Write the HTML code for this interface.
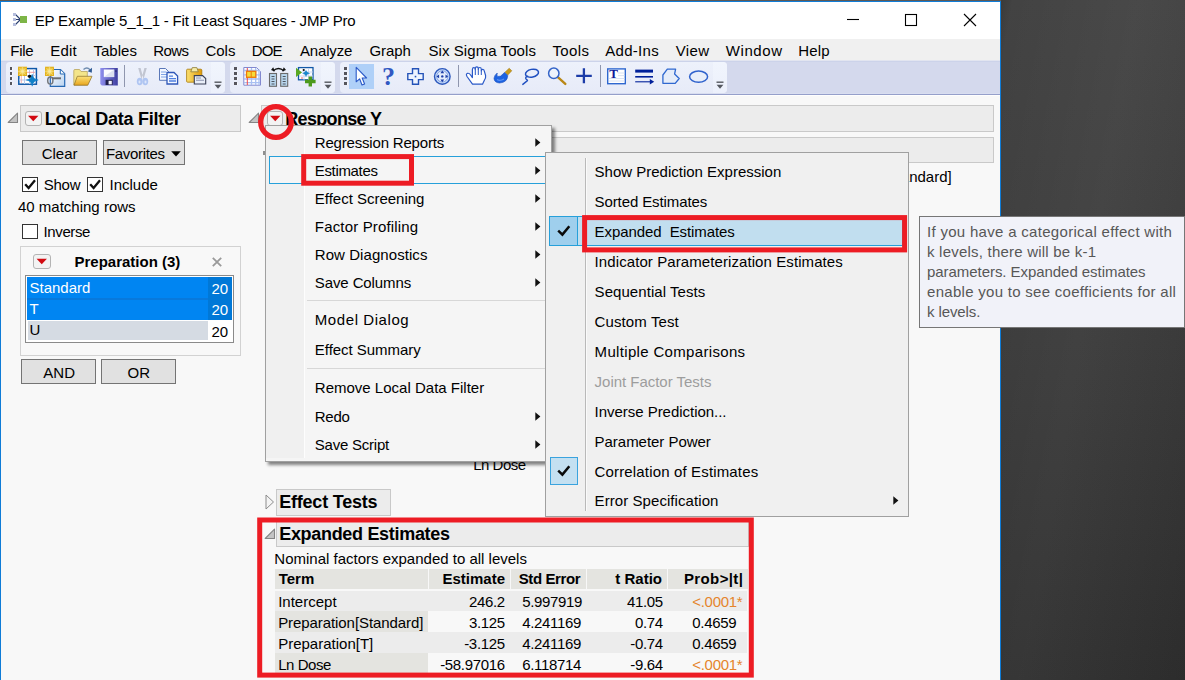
<!DOCTYPE html>
<html><head><meta charset="utf-8"><title>EP Example 5_1_1 - Fit Least Squares - JMP Pro</title>
<style>
html,body{margin:0;padding:0;}
body{width:1185px;height:680px;overflow:hidden;position:relative;background:#3a3a3a;font-family:"Liberation Sans", sans-serif;}
.b{position:absolute;box-sizing:border-box;}
.t{position:absolute;white-space:pre;}
svg{position:absolute;overflow:visible;}
</style></head><body>
<div class="b" style="left:1001px;top:0px;width:184px;height:680px;background:linear-gradient(to bottom,#434343 0,#3f3f3f 30%,#3a3a3a 55%,#303030 100%);"></div>
<div class="b" style="left:1001px;top:0px;width:184px;height:680px;background:linear-gradient(100deg,rgba(0,0,0,.12) 0,rgba(0,0,0,0) 12px,rgba(255,255,255,.03) 45%,rgba(0,0,0,.08) 100%);"></div>
<div class="b" style="left:0px;top:0px;width:1001px;height:680px;background:#f8f8f8;border-left:1px solid #0f7cd7;border-right:1px solid #0f7cd7;"></div>
<div class="b" style="left:0px;top:0px;width:1001px;height:1px;background:#5d5955;"></div>
<div class="b" style="left:0px;top:1px;width:1001px;height:1px;background:#0f7cd7;"></div>
<div class="b" style="left:1px;top:2px;width:999px;height:37px;background:#fff;"></div>
<svg style="left:12px;top:12px" width="16" height="16" viewBox="0 0 16 16">
<path d="M3.5 2.5 L8 7 M3.5 7.5 L8 7.5 M3.5 12.5 L8 8" stroke="#2a3f6e" stroke-width="1.1" fill="none"/>
<rect x="1" y="1" width="3" height="3" fill="#b4bcdc"/><rect x="1" y="6" width="3" height="3" fill="#b4bcdc"/><rect x="1" y="11" width="3" height="3" fill="#b4bcdc"/>
<rect x="8" y="4" width="7" height="7" fill="#7db546"/></svg>
<div class="t" style="left:34.8px;top:13.00px;font-size:15px;line-height:15px;color:#000;letter-spacing:-0.194px;">EP Example 5_1_1 - Fit Least Squares - JMP Pro</div>
<svg style="left:840px;top:8px" width="150" height="24" viewBox="0 0 150 24" fill="none" stroke="#000" stroke-width="1.1">
<path d="M7 11.5 H19"/><rect x="65.5" y="6.5" width="11" height="11"/><path d="M124 6 L136 18 M136 6 L124 18"/></svg>
<div class="b" style="left:1px;top:39px;width:999px;height:22px;background:#f0f0f0;"></div>
<div class="t" style="left:10.3px;top:43.00px;font-size:15px;line-height:15px;color:#000;letter-spacing:-0.257px;">File</div>
<div class="t" style="left:50.3px;top:43.00px;font-size:15px;line-height:15px;color:#000;letter-spacing:0.18px;">Edit</div>
<div class="t" style="left:93.5px;top:43.00px;font-size:15px;line-height:15px;color:#000;letter-spacing:0.008px;">Tables</div>
<div class="t" style="left:153.3px;top:43.00px;font-size:15px;line-height:15px;color:#000;letter-spacing:-0.605px;">Rows</div>
<div class="t" style="left:205.5px;top:43.00px;font-size:15px;line-height:15px;color:#000;letter-spacing:-0.039px;">Cols</div>
<div class="t" style="left:251.7px;top:43.00px;font-size:15px;line-height:15px;color:#000;letter-spacing:-0.858px;">DOE</div>
<div class="t" style="left:300px;top:43.00px;font-size:15px;line-height:15px;color:#000;letter-spacing:-0.163px;">Analyze</div>
<div class="t" style="left:369.5px;top:43.00px;font-size:15px;line-height:15px;color:#000;letter-spacing:-0.076px;">Graph</div>
<div class="t" style="left:428.5px;top:43.00px;font-size:15px;line-height:15px;color:#000;letter-spacing:0.069px;">Six Sigma Tools</div>
<div class="t" style="left:552.5px;top:43.00px;font-size:15px;line-height:15px;color:#000;letter-spacing:0.342px;">Tools</div>
<div class="t" style="left:605.3px;top:43.00px;font-size:15px;line-height:15px;color:#000;letter-spacing:0.283px;">Add-Ins</div>
<div class="t" style="left:675.7px;top:43.00px;font-size:15px;line-height:15px;color:#000;letter-spacing:0.383px;">View</div>
<div class="t" style="left:725.7px;top:43.00px;font-size:15px;line-height:15px;color:#000;letter-spacing:0.608px;">Window</div>
<div class="t" style="left:798.3px;top:43.00px;font-size:15px;line-height:15px;color:#000;letter-spacing:0.18px;">Help</div>
<div class="b" style="left:1px;top:60px;width:999px;height:34px;background:#d4d9ed;"></div>
<div class="b" style="left:1px;top:60px;width:999px;height:1px;background:#e2e5f0;"></div>
<div class="b" style="left:1px;top:61px;width:999px;height:1px;background:#ccd3ea;"></div>
<div class="b" style="left:1px;top:93px;width:999px;height:1px;background:#d8ddf0;"></div>
<div class="b" style="left:1px;top:94px;width:999px;height:1px;background:#959fca;"></div>
<div class="b" style="left:1px;top:95px;width:999px;height:1px;background:#fefefe;"></div>
<div class="b" style="left:5.5px;top:62px;width:219.5px;height:30.5px;background:linear-gradient(#edf1fb,#e7ebf8);border-radius:4px;"></div>
<div class="b" style="left:210.5px;top:62px;width:14.5px;height:30.5px;background:linear-gradient(#f1f5fd,#ecf0fb);border-radius:0 4px 4px 0;"></div>
<div class="b" style="left:10.5px;top:67.8px;width:2.8px;height:2.5px;background:#f7f8fd;"></div>
<div class="b" style="left:9.7px;top:67px;width:2.8px;height:2.5px;background:#55555c;"></div>
<div class="b" style="left:10.5px;top:72.8px;width:2.8px;height:2.5px;background:#f7f8fd;"></div>
<div class="b" style="left:9.7px;top:72px;width:2.8px;height:2.5px;background:#55555c;"></div>
<div class="b" style="left:10.5px;top:77.8px;width:2.8px;height:2.5px;background:#f7f8fd;"></div>
<div class="b" style="left:9.7px;top:77px;width:2.8px;height:2.5px;background:#55555c;"></div>
<div class="b" style="left:10.5px;top:82.8px;width:2.8px;height:2.5px;background:#f7f8fd;"></div>
<div class="b" style="left:9.7px;top:82px;width:2.8px;height:2.5px;background:#55555c;"></div>
<svg style="left:214.05px;top:81px" width="8" height="9" viewBox="0 0 8 9"><path d="M0.5 1.2 H7.5" stroke="#55585f" stroke-width="1.4"/><path d="M0.6 3.8 H7.4 L4 7.8 Z" fill="#55585f"/></svg>
<div class="b" style="left:230px;top:62px;width:105px;height:30.5px;background:linear-gradient(#edf1fb,#e7ebf8);border-radius:4px;"></div>
<div class="b" style="left:321px;top:62px;width:14px;height:30.5px;background:linear-gradient(#f1f5fd,#ecf0fb);border-radius:0 4px 4px 0;"></div>
<div class="b" style="left:235px;top:67.8px;width:2.8px;height:2.5px;background:#f7f8fd;"></div>
<div class="b" style="left:234.2px;top:67px;width:2.8px;height:2.5px;background:#55555c;"></div>
<div class="b" style="left:235px;top:72.8px;width:2.8px;height:2.5px;background:#f7f8fd;"></div>
<div class="b" style="left:234.2px;top:72px;width:2.8px;height:2.5px;background:#55555c;"></div>
<div class="b" style="left:235px;top:77.8px;width:2.8px;height:2.5px;background:#f7f8fd;"></div>
<div class="b" style="left:234.2px;top:77px;width:2.8px;height:2.5px;background:#55555c;"></div>
<div class="b" style="left:235px;top:82.8px;width:2.8px;height:2.5px;background:#f7f8fd;"></div>
<div class="b" style="left:234.2px;top:82px;width:2.8px;height:2.5px;background:#55555c;"></div>
<svg style="left:324.3px;top:81px" width="8" height="9" viewBox="0 0 8 9"><path d="M0.5 1.2 H7.5" stroke="#55585f" stroke-width="1.4"/><path d="M0.6 3.8 H7.4 L4 7.8 Z" fill="#55585f"/></svg>
<div class="b" style="left:340px;top:62px;width:387px;height:30.5px;background:linear-gradient(#edf1fb,#e7ebf8);border-radius:4px;"></div>
<div class="b" style="left:713px;top:62px;width:14px;height:30.5px;background:linear-gradient(#f1f5fd,#ecf0fb);border-radius:0 4px 4px 0;"></div>
<div class="b" style="left:345px;top:67.8px;width:2.8px;height:2.5px;background:#f7f8fd;"></div>
<div class="b" style="left:344.2px;top:67px;width:2.8px;height:2.5px;background:#55555c;"></div>
<div class="b" style="left:345px;top:72.8px;width:2.8px;height:2.5px;background:#f7f8fd;"></div>
<div class="b" style="left:344.2px;top:72px;width:2.8px;height:2.5px;background:#55555c;"></div>
<div class="b" style="left:345px;top:77.8px;width:2.8px;height:2.5px;background:#f7f8fd;"></div>
<div class="b" style="left:344.2px;top:77px;width:2.8px;height:2.5px;background:#55555c;"></div>
<div class="b" style="left:345px;top:82.8px;width:2.8px;height:2.5px;background:#f7f8fd;"></div>
<div class="b" style="left:344.2px;top:82px;width:2.8px;height:2.5px;background:#55555c;"></div>
<svg style="left:716.3px;top:81px" width="8" height="9" viewBox="0 0 8 9"><path d="M0.5 1.2 H7.5" stroke="#55585f" stroke-width="1.4"/><path d="M0.6 3.8 H7.4 L4 7.8 Z" fill="#55585f"/></svg>
<div class="b" style="left:124px;top:65px;width:1px;height:22px;background:#8f96ae;"></div>
<div class="b" style="left:458px;top:65px;width:1px;height:22px;background:#8f96ae;"></div>
<div class="b" style="left:600px;top:65px;width:1px;height:22px;background:#8f96ae;"></div>
<div class="b" style="left:348.7px;top:64px;width:25.5px;height:25px;background:#afd0f8;"></div>
<svg style="left:0;top:0" width="1001" height="100" viewBox="0 0 1001 100"><defs>
<linearGradient id="gpage" x1="0" y1="0" x2="1" y2="1"><stop offset="0" stop-color="#ffffff"/><stop offset="1" stop-color="#b9d3f0"/></linearGradient>
<linearGradient id="gfold" x1="0" y1="0" x2="0" y2="1"><stop offset="0" stop-color="#fbe27a"/><stop offset="1" stop-color="#e9a51c"/></linearGradient>
<linearGradient id="gflop" x1="0" y1="0" x2="1" y2="0"><stop offset="0" stop-color="#8f8fee"/><stop offset="1" stop-color="#3f3fa0"/></linearGradient>
<linearGradient id="gclip" x1="0" y1="0" x2="1" y2="0"><stop offset="0" stop-color="#fbe070"/><stop offset="1" stop-color="#e09a08"/></linearGradient>
<radialGradient id="gstar"><stop offset="0" stop-color="#ffffff"/><stop offset=".35" stop-color="#f7dc6a"/><stop offset="1" stop-color="#e2b01c"/></radialGradient>
</defs><rect x="18.8" y="68.6" width="17.6" height="15.6" fill="#fff" stroke="#0f58a8" stroke-width="1.5"/><path d="M24.5 69 V84 M29.5 69 V84 M33.5 69 V84 M19 75.5 H36 M19 80 H36" stroke="#b9c9ea" stroke-width="1"/><path d="M27 72.3 H35" stroke="#f08a8a" stroke-width=".8"/><path d="M21.3 76 V83" stroke="#f4a0a0" stroke-width=".8"/><ellipse cx="29.7" cy="76.3" rx="1.9" ry="1.6" fill="#111"/><path d="M32.2 74.3 Q32.9 79.2 38.2 80 Q32.9 80.8 32.2 86.2 Q31.5 80.8 26.3 80 Q31.5 79.2 32.2 74.3Z" fill="#0f80c8" stroke="#0f80c8" stroke-width=".5"/><rect x="18" y="66.7" width="9" height="9.3" fill="url(#gstar)"/><path d="M22.5 66.7 V76.0 M18 71.3 H27 M19 67.7 L26 75.0 M26 67.7 L19 75.0" stroke="#f6e48e" stroke-width=".7" opacity=".8"/><path d="M50.3 69.5 H60.5 L64.7 73.7 V86.3 H50.3 Z" fill="url(#gpage)" stroke="#2568b4" stroke-width="1.2"/><path d="M60.3 69.8 V74 H64.5" fill="#fff" stroke="#2568b4" stroke-width="1"/><ellipse cx="50.3" cy="80.5" rx="2.6" ry="3.6" fill="none" stroke="#74787e" stroke-width="1.5"/><path d="M52 78.3 H61" stroke="#6b6d70" stroke-width="2"/><rect x="45" y="66.7" width="9" height="9.3" fill="url(#gstar)"/><path d="M49.5 66.7 V76.0 M45 71.3 H54 M46 67.7 L53 75.0 M53 67.7 L46 75.0" stroke="#f6e48e" stroke-width=".7" opacity=".8"/><path d="M73.8 70.5 Q73.8 69.5 75 69.5 H79.5 L81 71.5 H87.3 V85 H73.8 Z" fill="#f3e58a" stroke="#b9a55e" stroke-width=".8"/><path d="M77.3 76.3 H92 L87.8 85.2 H74 Z" fill="url(#gfold)" stroke="#8b6f2a" stroke-width=".7"/><path d="M83.5 69.5 Q87 66.5 90 69.8" fill="none" stroke="#6f8cb0" stroke-width="1.5"/><path d="M92 67.8 L91.8 72.8 L87.6 71.2 Z" fill="#2e5a94"/><path d="M100.3 68 H117.8 V85.5 H101.8 L100.3 84 Z" fill="url(#gflop)"/><rect x="103.8" y="69.5" width="10.4" height="7.6" fill="#fbfbff"/><path d="M103.8 77.1 L114.2 69.5 V77.1Z" fill="#d5daee" opacity=".8"/><rect x="105.6" y="79.8" width="7" height="5.2" fill="#20204a"/><rect x="108.6" y="80.8" width="3.2" height="3.6" fill="#f4f4ff"/><rect x="115.3" y="70.3" width="1.3" height="1.6" fill="#2a2a70"/><path d="M138.2 68 L140.6 68 L143.4 78.5 L141.4 79 Z M146.8 68 L144.4 68 L141.6 78.5 L143.6 79 Z" fill="#c1c5d1"/><ellipse cx="139.7" cy="81.5" rx="2.9" ry="3.7" fill="#afc5f2"/><ellipse cx="145.3" cy="81.5" rx="2.9" ry="3.7" fill="#afc5f2"/><ellipse cx="139.5" cy="82" rx="1" ry="1.4" fill="#dde7fb"/><ellipse cx="145.5" cy="82" rx="1" ry="1.4" fill="#dde7fb"/><path d="M159.5 68.5 H165.5 L168.5 71.5 V80.3 H159.5 Z" fill="#f4f8ff" stroke="#5b78b8" stroke-width="1"/><path d="M161 72 H166 M161 74.5 H167 M161 77 H167" stroke="#7fa4e6" stroke-width="1.1"/><path d="M167 72.5 H174 L177.6 76 V84 H167 Z" fill="#f4f8ff" stroke="#2f57b8" stroke-width="1.3"/><path d="M169 76.2 H173 M169 78.6 H176 M169 81 H176" stroke="#4f7fe0" stroke-width="1.3"/><rect x="186.6" y="69.2" width="15.2" height="13" rx="1" fill="url(#gclip)" stroke="#a87808" stroke-width=".8"/><path d="M190.8 71.8 L192.3 67.6 H196.8 L198.3 71.8 Z" fill="#f5ecaa" stroke="#8c7a38" stroke-width=".8"/><path d="M194.3 75.6 H202.6 L205.7 78.6 V84 H194.3 Z" fill="#e9eef8" stroke="#3c4258" stroke-width="1.1"/><path d="M196 78 H201 M196 80.3 H204" stroke="#8a93ad" stroke-width="1.1"/><path d="M243.8 67.5 H256.5 L260.5 71.5 V85.2 H243.8 Z" fill="#fff" stroke="#8288cf" stroke-width="1"/><path d="M244 70.5 H260 M244 74.8 H260 M244 79 H260 M244 82.6 H260 M251.5 68 V85 M255.7 68 V85 M259 71 V85" stroke="#a9c0f2" stroke-width="1.3"/><path d="M247.3 68 V85" stroke="#f04848" stroke-width="1"/><rect x="246.5" y="71.3" width="9.3" height="6" fill="#f5dc3a" stroke="#ee7a08" stroke-width="1.3"/><path d="M251.2 71.5 V77" stroke="#ee7a08" stroke-width="1"/><rect x="269.5" y="73.5" width="7" height="12.8" fill="#b9d7ee" stroke="#6a6a6a" stroke-width="1.1"/><rect x="280.7" y="73.5" width="7" height="12.8" fill="#b9d7ee" stroke="#6a6a6a" stroke-width="1.1"/><path d="M271.5 76.5 H274.5 M271.5 79 H274.5 M271.5 81.5 H274.5 M271.5 84 H274.5 M282.7 76.5 H285.7 M282.7 79 H285.7 M282.7 81.5 H285.7 M282.7 84 H285.7" stroke="#4c5560" stroke-width="1"/><path d="M273 71 Q278.5 66 284 71" fill="none" stroke="#111" stroke-width="1.3"/><path d="M271 70 L273.2 67.3 L275 71.6 Z M286 70 L283.8 67.3 L282 71.6 Z" fill="#111"/><rect x="298.5" y="67.6" width="14.5" height="12.2" fill="#fff" stroke="#1259a8" stroke-width="1.3"/><path d="M304 68 V80 M308.5 68 V80 M299 72 H313 M299 76 H313" stroke="#c3d0ee" stroke-width=".9"/><path d="M302 77 V79" stroke="#f04848" stroke-width=".8"/><ellipse cx="303.7" cy="70" rx="1.1" ry="1" fill="#111"/><path d="M306 69.5 Q306.5 72.8 310.5 73.3 Q306.5 73.8 306 77.5 Q305.4 73.8 302 73.3 Q305.4 72.8 306 69.5Z" fill="#1a86cc"/><path d="M296 67.8 L302 72.4 L296 77 Z" fill="#58a824"/><path d="M308.6 76.4 H312 V79.8 H315.6 V83.2 H312 V86.6 H308.6 V83.2 H305 V79.8 H308.6 Z" fill="#4c9a1c"/><path d="M356.2 67.4 V81.8 L359.6 78.8 L362 85 L364.6 84 L362.2 78 L366.6 78 Z" fill="#fbfdff" stroke="#2a59c8" stroke-width="1.1" stroke-linejoin="round"/><path d="M412.5 68.8 H418.5 V73.6 H423.2 V79.6 H418.5 V84.3 H412.5 V79.6 H407.8 V73.6 H412.5 Z" fill="#eef4ff" stroke="#2453b8" stroke-width="1.4"/><rect x="414.7" y="75.8" width="1.6" height="1.6" fill="#2453b8"/><circle cx="442.3" cy="76.4" r="7.8" fill="#c9dcf8" stroke="#2c58bd" stroke-width="1.4"/><circle cx="442.3" cy="76.4" r="5.6" fill="#e5eefc" stroke="#6a8edc" stroke-width=".8"/><path d="M442.3 70.6 L444.2 73.2 H440.4Z M442.3 82.2 L444.2 79.6 H440.4Z M436.5 76.4 L439.1 74.5 V78.3Z M448.1 76.4 L445.5 74.5 V78.3Z" fill="#1c3fa8"/><circle cx="442.3" cy="76.4" r="1.2" fill="#1c3fa8"/><path d="M472.5 84.2 L467 76.5 Q465.6 74 467.5 73.3 Q469.2 72.9 470.6 75 L472.4 77.6 V69.6 Q472.5 67.7 473.8 67.7 Q475.2 67.7 475.3 69.6 V68.6 Q475.4 66.9 476.8 66.9 Q478.2 66.9 478.3 68.6 V69.2 Q478.4 67.5 479.8 67.5 Q481.2 67.5 481.3 69.2 V70.8 Q481.5 69.3 482.8 69.4 Q484.2 69.5 484.3 71.2 L485.6 75.5 Q486 78 484.5 80 L482.5 84.2 Z" fill="#fff" stroke="#2a59c8" stroke-width="1.2" stroke-linejoin="round"/><path d="M475.3 69.5 V75 M478.3 69 V75 M481.3 70.5 V75" stroke="#2a59c8" stroke-width="1"/><path d="M505 72.2 L509.2 68.2 L511.8 70.8 L507.8 75 Z" fill="#c99a1c" stroke="#9a7410" stroke-width=".5"/><path d="M504.6 72.4 L507.8 75.6 Q507.3 82.6 499.5 83 Q494.2 82.6 494 78.2 Q494.2 75.3 497.3 73 Q496.2 75.6 498 76.4 Q500.6 76.9 502.4 74.6 Q503.4 73.3 504.6 72.4 Z" fill="#1d63e2" stroke="#1449b8" stroke-width=".6"/><path d="M497 79.5 Q500 81.5 504 79" stroke="#5d93f2" stroke-width="1.2" fill="none"/><ellipse cx="532" cy="73.2" rx="6.6" ry="3.9" transform="rotate(-12 532 73.2)" fill="none" stroke="#2050c0" stroke-width="1.5"/><path d="M527.8 76.2 Q524.5 77.5 526.3 79.3 Q528.6 80.2 526.5 81.4 L522.8 84.4" fill="none" stroke="#2050c0" stroke-width="1.4" stroke-linecap="round"/><path d="M557.8 77.2 L565.3 83.9" stroke="#b98716" stroke-width="2.4" stroke-linecap="round"/><circle cx="553.8" cy="73.3" r="5.2" fill="#eef3fc" stroke="#3464c8" stroke-width="1.5"/><path d="M583.9 68.3 V83.3 M576.2 75.8 H591.8" stroke="#1c3ca8" stroke-width="2.3"/><rect x="607.7" y="68.9" width="17.6" height="14.8" fill="#fff" stroke="#2f68d0" stroke-width="1.4"/><path d="M618 73 H624.5 M609 78.5 H624.5 M609 81 H624.5 M618 75.6 H624.5" stroke="#d5dff2" stroke-width=".9"/><path d="M635.2 71.1 H653" stroke="#00209a" stroke-width="3"/><path d="M635.2 76.8 H653" stroke="#00209a" stroke-width="1.6"/><path d="M635.2 81.8 H651" stroke="#00209a" stroke-width="1.1"/><path d="M649.8 79 L654.2 81.8 L649.8 84.6 Z" fill="#00209a"/><path d="M662.9 83.3 V75 L667.3 69.2 H675.6 L674.6 74 L679.2 78.5 L675.2 83.3 Z" fill="#e6edf9" stroke="#2f68d0" stroke-width="1.3" stroke-linejoin="round"/><ellipse cx="698.6" cy="76.7" rx="9" ry="5.6" fill="#e8eef9" stroke="#2f62cc" stroke-width="1.5"/></svg>
<div class="t" style="left:382px;top:61.5px;font:bold 26px/30px 'Liberation Serif',serif;color:#3158c2;">?</div>
<div class="t" style="left:609.3px;top:67px;font:bold 13px/14px 'Liberation Serif',serif;color:#10189a;">T</div>
<svg style="left:7px;top:112px" width="12" height="12" viewBox="0 0 12 12"><path d="M10.5 1.2 V10.5 H1.2 Z" fill="#c4c4c4" stroke="#858585" stroke-width="1.1" stroke-linejoin="round"/></svg>
<div class="b" style="left:20px;top:105px;width:221px;height:26.5px;background:#ececec;border:1px solid #c9c9c9;"></div>
<div class="b" style="left:25px;top:111px;width:16.5px;height:14.5px;background:#f3f3f3;border:1px solid #b4b4b4;border-radius:3px;"></div>
<svg style="left:25px;top:111px" width="16.5" height="14.5" viewBox="0 0 16.5 14.5"><path d="M3.05 4.65 H13.45 L8.25 10.15 Z" fill="#d20a11"/></svg>
<div class="t" style="left:44.8px;top:110.00px;font-size:18px;line-height:18px;color:#000;font-weight:700;letter-spacing:-0.253px;">Local Data Filter</div>
<div class="b" style="left:22px;top:140px;width:75px;height:25px;background:#e1e1e1;border:1px solid #747474;"></div>
<div class="t" style="left:41.7px;top:146.00px;font-size:15px;line-height:15px;color:#000;">Clear</div>
<div class="b" style="left:103px;top:140px;width:82px;height:25px;background:#e1e1e1;border:1px solid #747474;"></div>
<div class="t" style="left:106px;top:146.00px;font-size:15px;line-height:15px;color:#000;letter-spacing:-0.336px;">Favorites</div>
<svg style="left:171px;top:151px" width="10" height="6" viewBox="0 0 10 6"><path d="M0.2 0.2 H9.8 L5 5.4 Z" fill="#000"/></svg>
<div class="b" style="left:22px;top:177px;width:16px;height:15px;background:#fff;border:1px solid #333;"></div>
<svg style="left:22px;top:177px" width="16" height="15" viewBox="0 0 16 15"><path d="M3.2 7.2 L6.6 11 L13 3.2" fill="none" stroke="#111" stroke-width="2.3"/></svg>
<div class="t" style="left:43.8px;top:177.00px;font-size:15px;line-height:15px;color:#000;letter-spacing:-0.277px;">Show</div>
<div class="b" style="left:87px;top:177px;width:16px;height:15px;background:#fff;border:1px solid #333;"></div>
<svg style="left:87px;top:177px" width="16" height="15" viewBox="0 0 16 15"><path d="M3.2 7.2 L6.6 11 L13 3.2" fill="none" stroke="#111" stroke-width="2.3"/></svg>
<div class="t" style="left:109.5px;top:177.00px;font-size:15px;line-height:15px;color:#000;">Include</div>
<div class="t" style="left:18px;top:199.00px;font-size:15px;line-height:15px;color:#000;">40 matching rows</div>
<div class="b" style="left:22px;top:224px;width:16px;height:15px;background:#fff;border:1px solid #333;"></div>
<div class="t" style="left:43.6px;top:224.00px;font-size:15px;line-height:15px;color:#000;letter-spacing:-0.401px;">Inverse</div>
<div class="b" style="left:20px;top:245.5px;width:221px;height:110px;background:#f8f8f8;border:1px solid #d2d2d2;"></div>
<div class="b" style="left:33.3px;top:254.3px;width:17.5px;height:14.5px;background:#f3f3f3;border:1px solid #b4b4b4;border-radius:3px;"></div>
<svg style="left:33.3px;top:254.3px" width="17.5" height="14.5" viewBox="0 0 17.5 14.5"><path d="M3.55 4.65 H13.95 L8.75 10.15 Z" fill="#d20a11"/></svg>
<div class="t" style="left:74.5px;top:254.00px;font-size:15px;line-height:15px;color:#000;font-weight:700;">Preparation (3)</div>
<svg style="left:212px;top:256.5px" width="10" height="10" viewBox="0 0 10 10"><path d="M0.8 0.8 L9.2 9.2 M9.2 0.8 L0.8 9.2" stroke="#9a9a9a" stroke-width="1.8"/></svg>
<div class="b" style="left:25px;top:275px;width:209px;height:67.5px;background:#fff;border:1px solid #8a8a8a;"></div>
<div class="b" style="left:27px;top:277px;width:181px;height:21px;background:#0085f2;"></div>
<div class="b" style="left:208px;top:277px;width:24px;height:21px;background:#0078d7;"></div>
<div class="b" style="left:27px;top:297.6px;width:181px;height:2px;background:#0879dc;"></div>
<div class="b" style="left:27px;top:299.5px;width:181px;height:20.3px;background:#0085f2;"></div>
<div class="b" style="left:208px;top:298px;width:24px;height:21.8px;background:#0078d7;"></div>
<div class="b" style="left:28px;top:321px;width:180px;height:19px;background:#d5dbe3;"></div>
<div class="t" style="left:29.5px;top:280.00px;font-size:15px;line-height:15px;color:#fff;">Standard</div>
<div class="t" style="left:29.5px;top:301.00px;font-size:15px;line-height:15px;color:#fff;">T</div>
<div class="t" style="left:29.5px;top:322.00px;font-size:15px;line-height:15px;color:#000;">U</div>
<div class="t" style="left:211.5px;top:281.00px;font-size:15px;line-height:15px;color:#fff;">20</div>
<div class="t" style="left:211.5px;top:302.00px;font-size:15px;line-height:15px;color:#fff;">20</div>
<div class="t" style="left:211.5px;top:324.00px;font-size:15px;line-height:15px;color:#000;">20</div>
<div class="b" style="left:21px;top:359px;width:75px;height:25px;background:#e1e1e1;border:1px solid #747474;"></div>
<div class="t" style="left:43.3px;top:365.00px;font-size:15px;line-height:15px;color:#000;">AND</div>
<div class="b" style="left:101px;top:359px;width:75px;height:25px;background:#e1e1e1;border:1px solid #747474;"></div>
<div class="t" style="left:127.5px;top:365.00px;font-size:15px;line-height:15px;color:#000;">OR</div>
<svg style="left:248px;top:112px" width="12" height="12" viewBox="0 0 12 12"><path d="M10.5 1.2 V10.5 H1.2 Z" fill="#c4c4c4" stroke="#858585" stroke-width="1.1" stroke-linejoin="round"/></svg>
<div class="b" style="left:261px;top:105px;width:733px;height:26.5px;background:#ececec;border:1px solid #c9c9c9;"></div>
<div class="b" style="left:266.5px;top:111px;width:16.5px;height:14.5px;background:#f3f3f3;border:1px solid #b4b4b4;border-radius:3px;"></div>
<svg style="left:266.5px;top:111px" width="16.5" height="14.5" viewBox="0 0 16.5 14.5"><path d="M3.05 4.65 H13.45 L8.25 10.15 Z" fill="#d20a11"/></svg>
<div class="t" style="left:285.3px;top:110.00px;font-size:18px;line-height:18px;color:#000;font-weight:700;letter-spacing:-0.68px;">Response Y</div>
<div class="b" style="left:276px;top:136.5px;width:718px;height:26px;background:#ececec;border:1px solid #c9c9c9;"></div>
<div class="t" style="right:233.29999999999995px;top:169.00px;font-size:15px;line-height:15px;color:#000;">Preparation[Standard]</div>
<div class="t" style="left:473.2px;top:457.00px;font-size:15px;line-height:15px;color:#000;letter-spacing:-0.496px;">Ln Dose</div>
<div class="b" style="left:263.4px;top:151px;width:1.7px;height:3.6px;background:#8f8f8f;"></div>
<svg style="left:265px;top:494px" width="10" height="16" viewBox="0 0 10 16"><path d="M1 1 L8.5 8 L1 15 Z" fill="#f4f4f4" stroke="#8c8c8c" stroke-width="1"/></svg>
<div class="b" style="left:276px;top:489px;width:115px;height:26.5px;background:#ececec;border:1px solid #c9c9c9;"></div>
<div class="t" style="left:279.2px;top:493.00px;font-size:18px;line-height:18px;color:#000;font-weight:700;letter-spacing:-0.209px;">Effect Tests</div>
<svg style="left:263.5px;top:528px" width="12" height="12" viewBox="0 0 12 12"><path d="M10.5 1.2 V10.5 H1.2 Z" fill="#c4c4c4" stroke="#858585" stroke-width="1.1" stroke-linejoin="round"/></svg>
<div class="b" style="left:276px;top:520.5px;width:473px;height:26px;background:#ececec;border:1px solid #c9c9c9;"></div>
<div class="t" style="left:279.2px;top:525.00px;font-size:18px;line-height:18px;color:#000;font-weight:700;letter-spacing:-0.31px;">Expanded Estimates</div>
<div class="t" style="left:274.3px;top:551.00px;font-size:15px;line-height:15px;color:#000;">Nominal factors expanded to all levels</div>
<div class="b" style="left:274.8px;top:569.2px;width:153px;height:19.4px;background:#e4e4e0;"></div>
<div class="b" style="left:429.2px;top:569.2px;width:80.5px;height:19.4px;background:#e4e4e0;"></div>
<div class="b" style="left:511.2px;top:569.2px;width:74.5px;height:19.4px;background:#e4e4e0;"></div>
<div class="b" style="left:587px;top:569.2px;width:79.7px;height:19.4px;background:#e4e4e0;"></div>
<div class="b" style="left:668px;top:569.2px;width:79.5px;height:19.4px;background:#e4e4e0;"></div>
<div class="b" style="left:274.8px;top:590.5px;width:472.7px;height:20.899999999999977px;background:#ececec;"></div>
<div class="b" style="left:274.8px;top:611.4px;width:153px;height:20.800000000000068px;background:#e4e4e0;"></div>
<div class="b" style="left:274.8px;top:632.2px;width:472.7px;height:20.899999999999977px;background:#ececec;"></div>
<div class="b" style="left:274.8px;top:653.1px;width:153px;height:20.899999999999977px;background:#e4e4e0;"></div>
<div class="t" style="left:278.7px;top:571.00px;font-size:15px;line-height:15px;color:#000;font-weight:700;">Term</div>
<div class="t" style="right:680px;top:571.00px;font-size:15px;line-height:15px;color:#000;font-weight:700;">Estimate</div>
<div class="t" style="left:518.7px;top:571.00px;font-size:15px;line-height:15px;color:#000;font-weight:700;letter-spacing:-0.389px;">Std Error</div>
<div class="t" style="right:523px;top:571.00px;font-size:15px;line-height:15px;color:#000;font-weight:700;">t Ratio</div>
<div class="t" style="left:684px;top:571.00px;font-size:15px;line-height:15px;color:#000;font-weight:700;letter-spacing:0.367px;">Prob&gt;|t|</div>
<div class="t" style="left:278.2px;top:594.00px;font-size:15px;line-height:15px;color:#000;">Intercept</div>
<div class="t" style="right:680.2px;top:594.00px;font-size:15px;line-height:15px;color:#000;letter-spacing:-0.32px;">246.2</div>
<div class="t" style="left:522.3px;top:594.00px;font-size:15px;line-height:15px;color:#000;letter-spacing:-0.36px;">5.997919</div>
<div class="t" style="right:522.2px;top:594.00px;font-size:15px;line-height:15px;color:#000;letter-spacing:-0.32px;">41.05</div>
<div class="t" style="left:692.3px;top:594.00px;font-size:15px;line-height:15px;color:#e5852c;letter-spacing:-0.3px;">&lt;.0001*</div>
<div class="t" style="left:278.2px;top:615.00px;font-size:15px;line-height:15px;color:#000;letter-spacing:-0.078px;">Preparation[Standard]</div>
<div class="t" style="right:680.2px;top:615.00px;font-size:15px;line-height:15px;color:#000;letter-spacing:-0.32px;">3.125</div>
<div class="t" style="left:522.3px;top:615.00px;font-size:15px;line-height:15px;color:#000;letter-spacing:-0.36px;">4.241169</div>
<div class="t" style="right:522.2px;top:615.00px;font-size:15px;line-height:15px;color:#000;letter-spacing:-0.32px;">0.74</div>
<div class="t" style="left:692.3px;top:615.00px;font-size:15px;line-height:15px;color:#000;letter-spacing:-0.3px;">0.4659</div>
<div class="t" style="left:278.2px;top:636.00px;font-size:15px;line-height:15px;color:#000;">Preparation[T]</div>
<div class="t" style="right:680.2px;top:636.00px;font-size:15px;line-height:15px;color:#000;letter-spacing:-0.32px;">-3.125</div>
<div class="t" style="left:522.3px;top:636.00px;font-size:15px;line-height:15px;color:#000;letter-spacing:-0.36px;">4.241169</div>
<div class="t" style="right:522.2px;top:636.00px;font-size:15px;line-height:15px;color:#000;letter-spacing:-0.32px;">-0.74</div>
<div class="t" style="left:692.3px;top:636.00px;font-size:15px;line-height:15px;color:#000;letter-spacing:-0.3px;">0.4659</div>
<div class="t" style="left:278.2px;top:657.00px;font-size:15px;line-height:15px;color:#000;letter-spacing:-0.462px;">Ln Dose</div>
<div class="t" style="right:680.2px;top:657.00px;font-size:15px;line-height:15px;color:#000;letter-spacing:-0.32px;">-58.97016</div>
<div class="t" style="left:522.3px;top:657.00px;font-size:15px;line-height:15px;color:#000;letter-spacing:-0.36px;">6.118714</div>
<div class="t" style="right:522.2px;top:657.00px;font-size:15px;line-height:15px;color:#000;letter-spacing:-0.32px;">-9.64</div>
<div class="t" style="left:692.3px;top:657.00px;font-size:15px;line-height:15px;color:#e5852c;letter-spacing:-0.3px;">&lt;.0001*</div>
<div class="b" style="left:265px;top:125px;width:287px;height:337px;background:#f5f5f5;border:1px solid #a0a0a0;box-shadow:3px 3px 3px rgba(0,0,0,.48);"></div>
<div class="b" style="left:266px;top:126px;width:37.5px;height:332px;background:#f0f0f0;"></div>
<div class="b" style="left:303.5px;top:126px;width:1.5px;height:332px;background:#fdfdfd;"></div>
<div class="b" style="left:269px;top:156px;width:280px;height:28px;background:#f5f5f5;border:1px solid #26a0da;"></div>
<div class="t" style="left:314.8px;top:135.00px;font-size:15px;line-height:15px;color:#000;letter-spacing:-0.186px;">Regression Reports</div>
<svg style="left:535px;top:138.1px" width="6" height="9" viewBox="0 0 6 9"><path d="M0.3 0.2 L5.4 4.5 L0.3 8.8 Z" fill="#111"/></svg>
<div class="t" style="left:314.8px;top:163.00px;font-size:15px;line-height:15px;color:#000;letter-spacing:-0.345px;">Estimates</div>
<svg style="left:535px;top:166.1px" width="6" height="9" viewBox="0 0 6 9"><path d="M0.3 0.2 L5.4 4.5 L0.3 8.8 Z" fill="#111"/></svg>
<div class="t" style="left:314.8px;top:191.00px;font-size:15px;line-height:15px;color:#000;letter-spacing:-0.013px;">Effect Screening</div>
<svg style="left:535px;top:194.1px" width="6" height="9" viewBox="0 0 6 9"><path d="M0.3 0.2 L5.4 4.5 L0.3 8.8 Z" fill="#111"/></svg>
<div class="t" style="left:314.8px;top:219.00px;font-size:15px;line-height:15px;color:#000;letter-spacing:0.168px;">Factor Profiling</div>
<svg style="left:535px;top:222.1px" width="6" height="9" viewBox="0 0 6 9"><path d="M0.3 0.2 L5.4 4.5 L0.3 8.8 Z" fill="#111"/></svg>
<div class="t" style="left:314.8px;top:247.00px;font-size:15px;line-height:15px;color:#000;letter-spacing:0.063px;">Row Diagnostics</div>
<svg style="left:535px;top:250.10000000000002px" width="6" height="9" viewBox="0 0 6 9"><path d="M0.3 0.2 L5.4 4.5 L0.3 8.8 Z" fill="#111"/></svg>
<div class="t" style="left:314.8px;top:275.00px;font-size:15px;line-height:15px;color:#000;letter-spacing:-0.104px;">Save Columns</div>
<svg style="left:535px;top:278.1px" width="6" height="9" viewBox="0 0 6 9"><path d="M0.3 0.2 L5.4 4.5 L0.3 8.8 Z" fill="#111"/></svg>
<div class="t" style="left:314.8px;top:312.00px;font-size:15px;line-height:15px;color:#000;letter-spacing:0.578px;">Model Dialog</div>
<div class="t" style="left:314.8px;top:342.00px;font-size:15px;line-height:15px;color:#000;letter-spacing:-0.032px;">Effect Summary</div>
<div class="t" style="left:314.8px;top:380.00px;font-size:15px;line-height:15px;color:#000;letter-spacing:0.007px;">Remove Local Data Filter</div>
<div class="t" style="left:314.8px;top:409.00px;font-size:15px;line-height:15px;color:#000;letter-spacing:-0.286px;">Redo</div>
<svg style="left:535px;top:412.2px" width="6" height="9" viewBox="0 0 6 9"><path d="M0.3 0.2 L5.4 4.5 L0.3 8.8 Z" fill="#111"/></svg>
<div class="t" style="left:314.8px;top:437.00px;font-size:15px;line-height:15px;color:#000;letter-spacing:-0.23px;">Save Script</div>
<svg style="left:535px;top:440.3px" width="6" height="9" viewBox="0 0 6 9"><path d="M0.3 0.2 L5.4 4.5 L0.3 8.8 Z" fill="#111"/></svg>
<div class="b" style="left:307px;top:300px;width:244px;height:1px;background:#d7d7d7;"></div>
<div class="b" style="left:307px;top:368px;width:244px;height:1px;background:#d7d7d7;"></div>
<div class="b" style="left:545px;top:152px;width:364px;height:365px;background:#f0f0f0;border:1px solid #a0a0a0;"></div>
<div class="b" style="left:585px;top:158px;width:1px;height:353px;background:#b9b9b9;"></div>
<div class="b" style="left:586px;top:158px;width:1px;height:353px;background:#fafafa;"></div>
<div class="b" style="left:549px;top:216px;width:354px;height:30px;background:#c1deef;border:1px solid #26a0da;"></div>
<div class="b" style="left:549px;top:216px;width:29px;height:30px;background:#9fcfed;border:1px solid #26a0da;"></div>
<div class="b" style="left:550px;top:457px;width:28px;height:28px;background:#c4e0f1;border:1px solid #3aa3de;"></div>
<svg style="left:557px;top:225px" width="14" height="12" viewBox="0 0 14 12"><path d="M1.2 5.6 L5.4 9.6 L12.3 1.2" fill="none" stroke="#0a0a0a" stroke-width="2.5"/></svg>
<svg style="left:557px;top:464.5px" width="14" height="12" viewBox="0 0 14 12"><path d="M1.2 5.6 L5.4 9.6 L12.3 1.2" fill="none" stroke="#0a0a0a" stroke-width="2.5"/></svg>
<div class="t" style="left:594.6px;top:164.00px;font-size:15px;line-height:15px;color:#000;letter-spacing:-0.003px;">Show Prediction Expression</div>
<div class="t" style="left:594.6px;top:194.00px;font-size:15px;line-height:15px;color:#000;letter-spacing:-0.108px;">Sorted Estimates</div>
<div class="t" style="left:594.6px;top:224.00px;font-size:15px;line-height:15px;color:#000;letter-spacing:-0.086px;">Expanded  Estimates</div>
<div class="t" style="left:594.6px;top:254.00px;font-size:15px;line-height:15px;color:#000;letter-spacing:0.088px;">Indicator Parameterization Estimates</div>
<div class="t" style="left:594.6px;top:284.00px;font-size:15px;line-height:15px;color:#000;letter-spacing:0.059px;">Sequential Tests</div>
<div class="t" style="left:594.6px;top:314.00px;font-size:15px;line-height:15px;color:#000;letter-spacing:0.101px;">Custom Test</div>
<div class="t" style="left:594.6px;top:344.00px;font-size:15px;line-height:15px;color:#000;letter-spacing:0.33px;">Multiple Comparisons</div>
<div class="t" style="left:594.6px;top:374.00px;font-size:15px;line-height:15px;color:#9d9d9d;letter-spacing:-0.028px;">Joint Factor Tests</div>
<div class="t" style="left:594.6px;top:404.00px;font-size:15px;line-height:15px;color:#000;letter-spacing:-0.033px;">Inverse Prediction...</div>
<div class="t" style="left:594.6px;top:434.00px;font-size:15px;line-height:15px;color:#000;letter-spacing:-0.037px;">Parameter Power</div>
<div class="t" style="left:594.6px;top:464.00px;font-size:15px;line-height:15px;color:#000;letter-spacing:0.153px;">Correlation of Estimates</div>
<div class="t" style="left:594.6px;top:493.00px;font-size:15px;line-height:15px;color:#000;letter-spacing:0.069px;">Error Specification</div>
<svg style="left:892.5px;top:496.0px" width="6" height="9" viewBox="0 0 6 9"><path d="M0.3 0.2 L5.4 4.5 L0.3 8.8 Z" fill="#111"/></svg>
<div class="b" style="left:919px;top:216px;width:266px;height:111.5px;background:#f1f2f9;border:1px solid #767676;"></div>
<div class="t" style="left:927px;top:224.00px;font-size:15px;line-height:15px;color:#575757;letter-spacing:0.302px;">If you have a categorical effect with</div>
<div class="t" style="left:927px;top:244.00px;font-size:15px;line-height:15px;color:#575757;letter-spacing:0.219px;">k levels, there will be k-1</div>
<div class="t" style="left:927px;top:264.00px;font-size:15px;line-height:15px;color:#575757;letter-spacing:-0.053px;">parameters. Expanded estimates</div>
<div class="t" style="left:927px;top:284.00px;font-size:15px;line-height:15px;color:#575757;letter-spacing:0.289px;">enable you to see coefficients for all</div>
<div class="t" style="left:927px;top:304.00px;font-size:15px;line-height:15px;color:#575757;letter-spacing:-0.098px;">k levels.</div>
<svg style="left:0;top:0" width="1185" height="680" viewBox="0 0 1185 680" fill="none" stroke="#ed1c24" stroke-width="5"><circle cx="276" cy="122" r="15.3" stroke-width="5.3"/><rect x="303.7" y="156.6" width="107.8" height="26.6"/><rect x="584.6" y="217.6" width="320" height="32.3"/><rect x="259.7" y="520" width="491.6" height="155.1"/></svg>
</body></html>
